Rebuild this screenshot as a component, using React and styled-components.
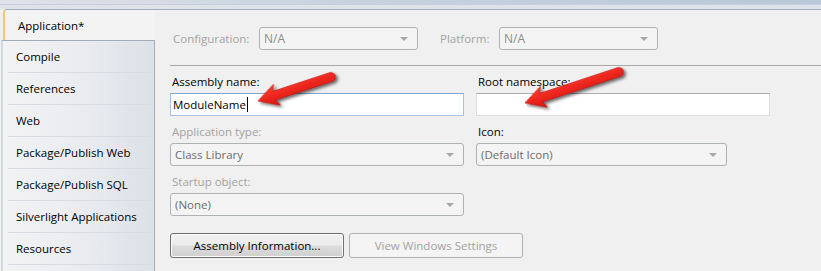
import React from "react";
import styled, { createGlobalStyle } from "styled-components";

const Global = createGlobalStyle`
  html, body { margin: 0; padding: 0; background: #f0f0f0; }
  * { box-sizing: border-box; }
`;

const Frame = styled.div`
  position: relative;
  width: 821px;
  height: 271px;
  overflow: hidden;
  background: #f0f0f0;
  font-family: "Open Sans", "Noto Sans", sans-serif;
  font-size: 11.5px;
  color: #000;
  display: flex;
  flex-direction: column;
`;

const TopBand = styled.div`
  height: 4px;
  flex: none;
  background: linear-gradient(to right, #dfe3e9 0%, #c9d3df 40%, #b8c7d9 100%);
`;

const SubBand = styled.div`
  height: 5px;
  flex: none;
  background: #dee3ea;
  border-top: 1px solid #c6cfdb;
`;

const Body = styled.div`
  flex: 1;
  display: flex;
  min-height: 0;
`;

const Sidebar = styled.div`
  width: 155px;
  flex: none;
  display: flex;
  flex-direction: column;
`;

const ActiveTab = styled.div`
  height: 31px;
  margin-left: 3px;
  padding-left: 13px;
  display: flex;
  align-items: center;
  background: #f3f3f3;
  border-top: 1px solid #a3acb9;
  border-left: 2px solid #efc972;
  border-top-left-radius: 4px;
`;

const TabList = styled.div`
  flex: 1;
  margin-left: 1px;
  border-left: 2px solid #d3dae4;
  border-top: 1px solid #a3acb9;
  border-right: 1px solid #a3acb9;
  background: linear-gradient(to right, #f3f3f4 0%, #e9ebef 55%, #dce1e8 100%);
  display: flex;
  flex-direction: column;
`;

const TabItem = styled.div`
  height: 32px;
  flex: none;
  display: flex;
  align-items: center;
  padding: 0 0 1px 13px;
  position: relative;
  &::after {
    content: "";
    position: absolute;
    left: 5px;
    right: 3px;
    bottom: 0;
    height: 1px;
    background: #d7dbe2;
  }
`;

const Main = styled.div`
  flex: 1;
  border-top: 1px solid #a3acb9;
  padding: 17px 0 0 15px;
  display: flex;
  flex-direction: column;
`;

const ConfigRow = styled.div`
  display: flex;
  align-items: center;
  height: 23px;
`;

const InlineLabel = styled.div`
  width: ${(p) => p.$w}px;
  margin-left: ${(p) => p.$ml || 0}px;
  padding-left: ${(p) => p.$pl ?? 3}px;
  color: #a3a3a3;
  flex: none;
`;

const Combo = styled.div`
  width: ${(p) => p.$w}px;
  height: 23px;
  flex: none;
  border: 1px solid #adb2b5;
  border-radius: 3px;
  background: #f4f4f4;
  display: flex;
  align-items: center;
  padding: 0 9px 0 4px;
  color: ${(p) => p.$color || "#6d6d6d"};
  font-size: ${(p) => p.$fs || "11.5px"};
`;

const ComboText = styled.span`
  flex: 1;
  white-space: nowrap;
`;

const Caret = styled.span`
  width: 0;
  height: 0;
  border-left: 4px solid transparent;
  border-right: 4px solid transparent;
  border-top: 4px solid #a7a7a7;
  flex: none;
`;

const Divider = styled.div`
  height: 1px;
  background: #a8a8a8;
  margin: 15px 0 8px 0;
`;

const FieldGrid = styled.div`
  display: grid;
  grid-template-columns: 294px 294px;
  column-gap: 12px;
  row-gap: 8px;
  align-items: start;
`;

const Field = styled.div`
  display: flex;
  flex-direction: column;
`;

const Label = styled.div`
  height: 16px;
  line-height: 16px;
  margin-bottom: 3px;
  padding-left: 2px;
  color: ${(p) => (p.$disabled ? "#a3a3a3" : "#000")};
`;

const TextBox = styled.div`
  width: ${(p) => p.$w}px;
  height: 23px;
  background: #fff;
  border: 1px solid ${(p) => (p.$focused ? "#a6c3e2" : "#dcdde2")};
  border-top-color: ${(p) => (p.$focused ? "#7fa6d0" : "#abadb3")};
  display: flex;
  align-items: center;
  padding-left: 2px;
  color: #000;
  font-size: 11.5px;
`;

const Cursor = styled.span`
  display: inline-block;
  width: 1px;
  height: 15px;
  background: #000;
  margin-left: 1px;
`;

const ButtonRow = styled.div`
  display: flex;
  gap: 5px;
  margin-top: 17px;
`;

const Button = styled.div`
  width: 174px;
  height: 25px;
  border-radius: 3px;
  display: flex;
  align-items: center;
  justify-content: center;
  border: 1px solid ${(p) => (p.$disabled ? "#adb2b5" : "#707070")};
  color: ${(p) => (p.$disabled ? "#a3a3a3" : "#000")};
  background: ${(p) =>
    p.$disabled
      ? "#f4f4f4"
      : "linear-gradient(to bottom, #f2f2f2 0%, #ebebeb 48%, #dddddd 52%, #cfcfcf 100%)"};
  box-shadow: ${(p) => (p.$disabled ? "none" : "inset 0 0 0 1px #fcfcfc")};
`;

const Overlay = styled.svg`
  position: absolute;
  left: 0;
  top: 0;
  width: 821px;
  height: 271px;
  pointer-events: none;
`;

const tabs = [
  "Compile",
  "References",
  "Web",
  "Package/Publish Web",
  "Package/Publish SQL",
  "Silverlight Applications",
  "Resources",
];

function Arrow({ tip, tail }) {
  const dx = tail[0] - tip[0];
  const dy = tail[1] - tip[1];
  const L = Math.sqrt(dx * dx + dy * dy);
  const ang = (Math.atan2(dy, dx) * 180) / Math.PI;
  const d = `M0,0 L20,-11 L17,-4.5 L${L},-4.5 A4.5,4.5 0 0 1 ${L},4.5 L17,4.5 L20,11 Z`;
  return (
    <g transform={`translate(${tip[0]},${tip[1]}) rotate(${ang})`} filter="url(#sh)">
      <path d={d} fill="url(#redg)" stroke="#b30a08" strokeWidth="0.6" />
    </g>
  );
}

export default function App() {
  return (
    <>
      <Global />
      <Frame>
        <TopBand />
        <SubBand />
        <Body>
          <Sidebar>
            <ActiveTab>Application*</ActiveTab>
            <TabList>
              {tabs.map((t) => (
                <TabItem key={t}>{t}</TabItem>
              ))}
            </TabList>
          </Sidebar>
          <Main>
            <ConfigRow>
              <InlineLabel $w={89}>Configuration:</InlineLabel>
              <Combo $w={159} $color="#8c8c8c" $fs="12px">
                <ComboText>N/A</ComboText>
                <Caret />
              </Combo>
              <InlineLabel $w={59} $ml={22} $pl={0}>Platform:</InlineLabel>
              <Combo $w={159} $color="#8c8c8c" $fs="12px">
                <ComboText>N/A</ComboText>
                <Caret />
              </Combo>
            </ConfigRow>
            <Divider />
            <FieldGrid>
              <Field>
                <Label>Assembly name:</Label>
                <TextBox $w={294} $focused>
                  ModuleName
                  <Cursor />
                </TextBox>
              </Field>
              <Field>
                <Label>Root namespace:</Label>
                <TextBox $w={294} />
              </Field>
              <Field>
                <Label $disabled>Application type:</Label>
                <Combo $w={294}>
                  <ComboText>Class Library</ComboText>
                  <Caret />
                </Combo>
              </Field>
              <Field>
                <Label>Icon:</Label>
                <Combo $w={251}>
                  <ComboText>(Default Icon)</ComboText>
                  <Caret />
                </Combo>
              </Field>
              <Field>
                <Label $disabled>Startup object:</Label>
                <Combo $w={294}>
                  <ComboText>(None)</ComboText>
                  <Caret />
                </Combo>
              </Field>
            </FieldGrid>
            <ButtonRow>
              <Button>Assembly Information...</Button>
              <Button $disabled>View Windows Settings</Button>
            </ButtonRow>
          </Main>
        </Body>
        <Overlay viewBox="0 0 821 271">
          <defs>
            <linearGradient id="redg" x1="0" y1="0" x2="0" y2="1">
              <stop offset="0" stopColor="#ff3b2e" />
              <stop offset="1" stopColor="#d9120d" />
            </linearGradient>
            <filter id="sh" x="-20%" y="-60%" width="140%" height="220%">
              <feDropShadow dx="1.5" dy="2.5" stdDeviation="1.6" floodColor="#000" floodOpacity="0.6" />
            </filter>
          </defs>
          <Arrow tip={[258, 101]} tail={[331, 77]} />
          <Arrow tip={[525, 103]} tail={[619, 72]} />
        </Overlay>
      </Frame>
    </>
  );
}
